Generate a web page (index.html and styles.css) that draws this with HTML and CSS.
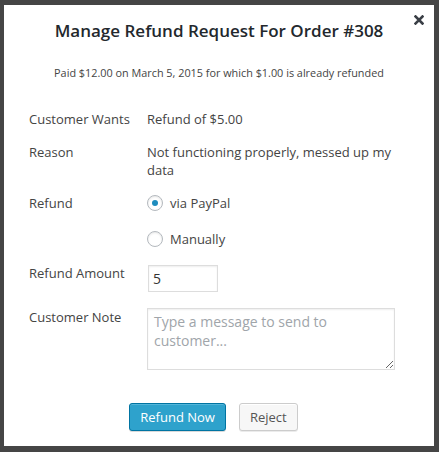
FILE: index.html
```html
<!DOCTYPE html>
<html>
<head>
<meta charset="utf-8">
<link rel="stylesheet" href="styles.css">
</head>
<body>
<div class="page">
  <div class="modal">
    <button class="close" aria-label="Close">
      <svg width="10" height="10" viewBox="0 0 10 10"><path d="M1.5 1.5 L8.5 8.5 M8.5 1.5 L1.5 8.5" stroke="#3a3f46" stroke-width="2.6" stroke-linecap="square"/></svg>
    </button>
    <h2 class="title">Manage Refund Request For Order #308</h2>
    <p class="subtitle">Paid $12.00 on March 5, 2015 for which $1.00 is already refunded</p>
    <div class="rows">
      <div class="row r-wants">
        <div class="label">Customer Wants</div>
        <div class="value">Refund of $5.00</div>
      </div>
      <div class="row r-reason">
        <div class="label">Reason</div>
        <div class="value">Not functioning properly, messed up my data</div>
      </div>
      <div class="row r-refund">
        <div class="label">Refund</div>
        <div class="value options">
          <label class="option"><span class="radio checked"></span>via PayPal</label>
          <label class="option"><span class="radio"></span>Manually</label>
        </div>
      </div>
      <div class="row r-amount">
        <div class="label">Refund Amount</div>
        <div class="value"><input class="amount" type="text" value="5"></div>
      </div>
      <div class="row r-note">
        <div class="label">Customer Note</div>
        <div class="value"><textarea class="note" placeholder="Type a message to send to customer..."></textarea></div>
      </div>
    </div>
    <div class="actions">
      <button class="btn primary">Refund Now</button>
      <button class="btn secondary">Reject</button>
    </div>
  </div>
</div>
</body>
</html>
```
FILE: styles.css
```css
html, body {
  margin: 0;
  padding: 0;
}
body {
  background: #454545;
  font-family: "Open Sans", "Liberation Sans", sans-serif;
  color: #444;
  width: 439px;
  height: 452px;
  overflow: hidden;
}
.page {
  padding: 5px 5px 6px 4px;
}
.modal {
  position: relative;
  width: 430px;
  height: 441px;
  background: #fff;
  box-sizing: border-box;
  padding-top: 14px;
}
.close {
  position: absolute;
  top: 9px;
  right: 9px;
  width: 12px;
  height: 12px;
  padding: 0;
  border: 0;
  background: none;
  display: flex;
  align-items: center;
  justify-content: center;
}
.title {
  margin: 0;
  text-align: center;
  font-size: 17px;
  line-height: 24px;
  font-weight: 600;
  color: #23282d;
}
.subtitle {
  margin: 22px 0 0;
  text-align: center;
  font-size: 10.85px;
  line-height: 16px;
  color: #444;
}
.rows {
  margin-top: 29px;
  padding-left: 25px;
  display: flex;
  flex-direction: column;
}
.row {
  display: grid;
  grid-template-columns: 118px 1fr;
  font-size: 13px;
  line-height: 18px;
  align-items: start;
}
.value {
  padding-right: 40px;
}
.r-reason, .r-refund {
  margin-top: 15px;
}
.r-amount, .r-note {
  margin-top: 16px;
}
.options {
  display: flex;
  flex-direction: column;
  gap: 18px;
}
.option {
  display: flex;
  align-items: center;
  gap: 7px;
  height: 18px;
}
.radio {
  width: 16px;
  height: 16px;
  box-sizing: border-box;
  border-radius: 50%;
  border: 1px solid #b4b9be;
  box-shadow: inset 0 1px 2px rgba(0,0,0,.1);
  display: flex;
  align-items: center;
  justify-content: center;
  background: #fff;
}
.radio.checked::after {
  content: "";
  width: 6px;
  height: 6px;
  border-radius: 50%;
  background: #1e8cbe;
}
.amount {
  display: block;
  width: 70px;
  height: 27px;
  box-sizing: border-box;
  margin: 1px 0 0 1px;
  border: 1px solid #ddd;
  box-shadow: inset 0 1px 2px rgba(0,0,0,.07);
  padding: 0 4px;
  font-family: "Open Sans", "Liberation Sans", sans-serif;
  font-size: 14px;
  color: #333;
  outline: none;
}
.note {
  display: block;
  width: 248px;
  height: 62px;
  box-sizing: border-box;
  border: 1px solid #ddd;
  box-shadow: inset 0 1px 2px rgba(0,0,0,.07);
  padding: 3px 6px;
  font-family: "Open Sans", "Liberation Sans", sans-serif;
  font-size: 14px;
  line-height: 19px;
  color: #333;
  resize: vertical;
  outline: none;
}
.note::placeholder {
  color: #a0a5aa;
}
.actions {
  margin-top: 33px;
  display: flex;
  justify-content: center;
  gap: 13px;
  padding-right: 11px;
}
.btn {
  height: 28px;
  box-sizing: border-box;
  padding: 0 10px;
  font-family: "Open Sans", "Liberation Sans", sans-serif;
  font-size: 13px;
  line-height: 26px;
  border-radius: 3px;
  border: 1px solid;
}
.primary {
  background: #2ea2cc;
  border-color: #0074a2;
  color: #fff;
  box-shadow: inset 0 1px 0 rgba(120,200,230,.5), 0 1px 0 rgba(0,0,0,.15);
}
.secondary {
  background: #f7f7f7;
  border-color: #ccc;
  color: #555;
  box-shadow: inset 0 1px 0 #fff, 0 1px 0 rgba(0,0,0,.08);
}
```
